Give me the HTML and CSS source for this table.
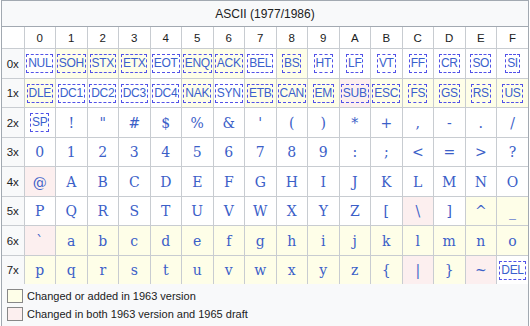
FILE: index.html
```html
<!DOCTYPE html>
<html>
<head>
<meta charset="utf-8">
<link rel="stylesheet" href="styles.css">
</head>
<body>
<div class="frame">
<table class="ascii">
<colgroup><col class="c-head"><col span="16"></colgroup>
<tr class="title"><th colspan="17">ASCII (1977/1986)</th></tr>
<tr class="cols"><th></th><th>0</th><th>1</th><th>2</th><th>3</th><th>4</th><th>5</th><th>6</th><th>7</th><th>8</th><th>9</th><th>A</th><th>B</th><th>C</th><th>D</th><th>E</th><th>F</th></tr>
<tr class="row"><th>0x</th>
<td><span class="cc">NUL</span></td><td class="y"><span class="cc">SOH</span></td><td class="y"><span class="cc">STX</span></td><td class="y"><span class="cc">ETX</span></td><td><span class="cc">EOT</span></td><td class="y"><span class="cc">ENQ</span></td><td class="y"><span class="cc">ACK</span></td><td><span class="cc">BEL</span></td><td class="y"><span class="cc">BS</span></td><td><span class="cc">HT</span></td><td><span class="cc">LF</span></td><td><span class="cc">VT</span></td><td><span class="cc">FF</span></td><td><span class="cc">CR</span></td><td><span class="cc">SO</span></td><td><span class="cc">SI</span></td></tr>
<tr class="row"><th>1x</th>
<td class="y"><span class="cc">DLE</span></td><td><span class="cc">DC1</span></td><td><span class="cc">DC2</span></td><td><span class="cc">DC3</span></td><td><span class="cc">DC4</span></td><td class="y"><span class="cc">NAK</span></td><td><span class="cc">SYN</span></td><td class="y"><span class="cc">ETB</span></td><td class="y"><span class="cc">CAN</span></td><td class="y"><span class="cc">EM</span></td><td class="p"><span class="cc">SUB</span></td><td class="y"><span class="cc">ESC</span></td><td class="y"><span class="cc">FS</span></td><td class="y"><span class="cc">GS</span></td><td class="y"><span class="cc">RS</span></td><td class="y"><span class="cc">US</span></td></tr>
<tr class="row"><th>2x</th>
<td><span class="cc">SP</span></td><td>!</td><td>"</td><td>#</td><td>$</td><td>%</td><td>&amp;</td><td>'</td><td>(</td><td>)</td><td>*</td><td>+</td><td>,</td><td>-</td><td>.</td><td>/</td></tr>
<tr class="row"><th>3x</th>
<td>0</td><td>1</td><td>2</td><td>3</td><td>4</td><td>5</td><td>6</td><td>7</td><td>8</td><td>9</td><td>:</td><td>;</td><td>&lt;</td><td>=</td><td>&gt;</td><td>?</td></tr>
<tr class="row"><th>4x</th>
<td class="p">@</td><td>A</td><td>B</td><td>C</td><td>D</td><td>E</td><td>F</td><td>G</td><td>H</td><td>I</td><td>J</td><td>K</td><td>L</td><td>M</td><td>N</td><td>O</td></tr>
<tr class="row"><th>5x</th>
<td>P</td><td>Q</td><td>R</td><td>S</td><td>T</td><td>U</td><td>V</td><td>W</td><td>X</td><td>Y</td><td>Z</td><td>[</td><td class="p">\</td><td>]</td><td class="y">^</td><td class="y">_</td></tr>
<tr class="row"><th>6x</th>
<td class="p">`</td><td class="y">a</td><td class="y">b</td><td class="y">c</td><td class="y">d</td><td class="y">e</td><td class="y">f</td><td class="y">g</td><td class="y">h</td><td class="y">i</td><td class="y">j</td><td class="y">k</td><td class="y">l</td><td class="y">m</td><td class="y">n</td><td class="y">o</td></tr>
<tr class="row"><th>7x</th>
<td class="y">p</td><td class="y">q</td><td class="y">r</td><td class="y">s</td><td class="y">t</td><td class="y">u</td><td class="y">v</td><td class="y">w</td><td class="y">x</td><td class="y">y</td><td class="y">z</td><td class="y">{</td><td class="p">|</td><td class="y">}</td><td class="p">~</td><td><span class="cc">DEL</span></td></tr>
</table>
<div class="legend">
<div class="item"><span class="sw sw-y"></span>Changed or added in 1963 version</div>
<div class="item"><span class="sw sw-p"></span>Changed in both 1963 version and 1965 draft</div>
</div>
</div>
</body>
</html>
```
FILE: styles.css
```css
html, body {
  margin: 0;
  padding: 0;
  background: #fff;
}
body {
  font-family: "Liberation Sans", Arial, sans-serif;
  color: #202122;
}
.frame {
  margin-left: 1px;
  width: 526px;
  border: 1px solid #a2a9b1;
  background: #f8f9fa;
}
.ascii {
  width: 100%;
  border-collapse: collapse;
  border-style: hidden;
  table-layout: fixed;
  background: #fff;
}
.c-head {
  width: 22px;
}
.ascii th,
.ascii td {
  border: 1px solid #c8ccd1;
  padding: 0;
  text-align: center;
  vertical-align: middle;
}
.title th {
  height: 25px;
  background: #f8f9fa;
  border-bottom-color: #a2a9b1;
  font-size: 12px;
  font-weight: normal;
}
.cols th {
  height: 21px;
  background: #fff;
  font-size: 11.5px;
  font-weight: normal;
}
.row th {
  background: #f8f9fa;
  font-size: 11.5px;
  font-weight: normal;
}
.row:nth-child(odd) td,
.row:nth-child(odd) th {
  height: 29px;
}
.row:nth-child(even) td,
.row:nth-child(even) th {
  height: 28px;
}
.row td {
  font-family: "DejaVu Serif", "Liberation Serif", serif;
  font-size: 14px;
  color: #3b60c8;
}
.row td.y {
  background: #fefee8;
}
.row td.p {
  background: #fcefef;
}
.cc {
  display: inline-block;
  font-family: "Liberation Sans", Arial, sans-serif;
  font-size: 12px;
  line-height: 17px;
  padding: 0 1px;
  border: 1px dashed #5252e8;
  color: #3a5fcd;
  letter-spacing: -0.3px;
}
.legend {
  padding: 3px 5px 4px;
  font-size: 11px;
  color: #202122;
}
.item {
  display: flex;
  align-items: center;
  height: 18px;
}
.sw {
  display: inline-block;
  width: 14px;
  height: 12px;
  border: 1px solid #888;
  margin-right: 4px;
}
.sw-y {
  background: #fefee8;
}
.sw-p {
  background: #fcefef;
}
```
